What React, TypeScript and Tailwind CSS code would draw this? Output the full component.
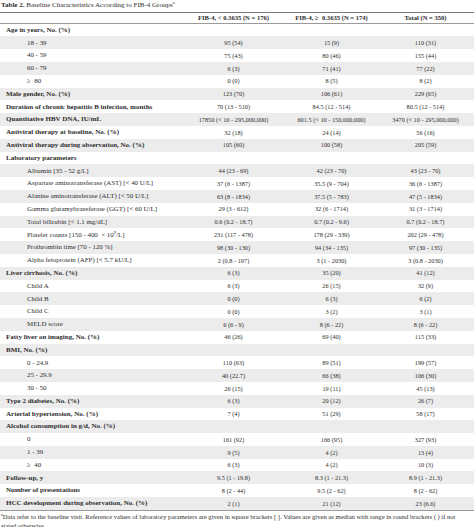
import React from "react";

type Row = {
  label: React.ReactNode;
  sub?: boolean;
  a?: string;
  b?: string;
  c?: string;
};

const rows: Row[] = [
  { label: "Age in years, No. (%)" },
  { label: "18 - 39", sub: true, a: "95 (54)", b: "15 (9)", c: "110 (31)" },
  { label: "40 - 59", sub: true, a: "75 (43)", b: "80 (46)", c: "155 (44)" },
  { label: "60 - 79", sub: true, a: "6 (3)", b: "71 (41)", c: "77 (22)" },
  { label: <>≥&nbsp;&nbsp;80</>, sub: true, a: "0 (0)", b: "8 (5)", c: "8 (2)" },
  { label: "Male gender, No. (%)", a: "123 (70)", b: "106 (61)", c: "229 (65)" },
  { label: "Duration of chronic hepatitis B infection, months", a: "70 (13 - 510)", b: "84.5 (12 - 514)", c: "80.5 (12 - 514)" },
  { label: "Quantitative HBV DNA, IU/mL", a: "17850 (< 10 - 295,000,000)", b: "601.5 (< 10 - 150,000,000)", c: "3470 (< 10 - 295,000,000)" },
  { label: "Antiviral therapy at baseline, No. (%)", a: "32 (18)", b: "24 (14)", c: "56 (16)" },
  { label: "Antiviral therapy during observation, No. (%)", a: "105 (60)", b: "100 (58)", c: "205 (59)" },
  { label: "Laboratory parameters" },
  { label: "Albumin [35 - 52 g/L]", sub: true, a: "44 (23 - 69)", b: "42 (23 - 70)", c: "43 (23 - 70)" },
  { label: "Aspartate aminotransferase (AST) [< 40 U/L]", sub: true, a: "37 (6 - 1387)", b: "35.5 (9 - 704)", c: "36 (6 - 1387)" },
  { label: "Alanine aminotransferase (ALT) [< 50 U/L]", sub: true, a: "63 (8 - 1834)", b: "37.5 (5 - 783)", c: "47 (5 - 1834)" },
  { label: "Gamma glutamyltransferase (GGT) [< 60 U/L]", sub: true, a: "29 (3 - 612)", b: "32 (6 - 1714)", c: "31 (3 - 1714)" },
  { label: "Total bilirubin [< 1.1 mg/dL]", sub: true, a: "0.6 (0.2 - 18.7)", b: "0.7 (0.2 - 9.6)", c: "0.7 (0.2 - 18.7)" },
  {
    label: (
      <>
        Platelet counts [150 - 400 &nbsp;× 10<sup className="text-[4.5px]">9</sup>/L]
      </>
    ),
    sub: true,
    a: "231 (117 - 478)",
    b: "178 (29 - 339)",
    c: "202 (29 - 478)",
  },
  { label: "Prothrombin time [70 - 120 %]", sub: true, a: "98 (30 - 130)", b: "94 (34 - 135)", c: "97 (30 - 135)" },
  { label: "Alpha fetoprotein (AFP) [< 5.7 kU/L]", sub: true, a: "2 (0.8 - 197)", b: "3 (1 - 2030)", c: "3 (0.8 - 2030)" },
  { label: "Liver cirrhosis, No. (%)", a: "6 (3)", b: "35 (20)", c: "41 (12)" },
  { label: "Child A", sub: true, a: "6 (3)", b: "26 (15)", c: "32 (9)" },
  { label: "Child B", sub: true, a: "0 (0)", b: "6 (3)", c: "6 (2)" },
  { label: "Child C", sub: true, a: "0 (0)", b: "3 (2)", c: "3 (1)" },
  { label: "MELD score", sub: true, a: "6 (6 - 9)", b: "8 (6 - 22)", c: "8 (6 - 22)" },
  { label: "Fatty liver on imaging, No. (%)", a: "46 (26)", b: "69 (40)", c: "115 (33)" },
  { label: "BMI, No. (%)" },
  { label: "0 - 24.9", sub: true, a: "110 (63)", b: "89 (51)", c: "199 (57)" },
  { label: "25 - 29.9", sub: true, a: "40 (22.7)", b: "66 (38)", c: "106 (30)" },
  { label: "30 - 50", sub: true, a: "26 (15)", b: "19 (11)", c: "45 (13)" },
  { label: "Type 2 diabetes, No. (%)", a: "6 (3)", b: "20 (12)", c: "26 (7)" },
  { label: "Arterial hypertension, No. (%)", a: "7 (4)", b: "51 (29)", c: "58 (17)" },
  { label: "Alcohol consumption in g/d, No. (%)" },
  { label: "0", sub: true, a: "161 (92)", b: "166 (95)", c: "327 (93)" },
  { label: "1 - 39", sub: true, a: "9 (5)", b: "4 (2)", c: "13 (4)" },
  { label: <>≥&nbsp;&nbsp;40</>, sub: true, a: "6 (3)", b: "4 (2)", c: "10 (3)" },
  { label: "Follow-up, y", a: "9.5 (1 - 19.8)", b: "8.3 (1 - 21.3)", c: "8.9 (1 - 21.3)" },
  { label: "Number of presentations", a: "8 (2 - 44)", b: "9.5 (2 - 62)", c: "8 (2 - 62)" },
  { label: "HCC development during observation, No. (%)", a: "2 (1)", b: "21 (12)", c: "23 (6.6)" },
];

const cols = "grid grid-cols-[185px_97px_99px_1fr] pr-1";

export default function App() {
  return (
    <div className="w-[474px] h-[527px] overflow-hidden bg-white text-[#2e2e2e] font-['Liberation_Serif',serif]">
      {/* Title */}
      <div className="h-[12px] leading-[10px] text-[7px] pl-[1px] whitespace-nowrap">
        <span className="font-bold">Table 2.</span> Baseline Characteristics According to FIB-4 Groups
        <span className="align-top text-[4.5px] leading-[6px]">a</span>
      </div>

      {/* Header */}
      <div className={`${cols} h-[11.6px] items-center border-t-[1.5px] border-b border-t-[#7a7a7a] border-b-[#9a9a9a] text-[6.6px] font-bold`}>
        <div />
        <div className="text-center">FIB-4, &lt; 0.3635 (N = 176)</div>
        <div className="text-center">FIB-4, ≥&nbsp; 0.3635 (N = 174)</div>
        <div className="text-center">Total (N = 350)</div>
      </div>

      {/* Body */}
      <div className="border-b border-[#9a9a9a]">
        {rows.map((r, i) => (
          <div
            key={i}
            className={`${cols} h-[12.8px] items-center whitespace-nowrap text-[6.3px] ${i % 2 === 1 ? "bg-[#ececec]" : "bg-white"}`}
          >
            <div className={r.sub ? "pl-[27px] text-[6.9px]" : "pl-[6px] text-[7px] font-bold"}>{r.label}</div>
            <div className="text-center">{r.a}</div>
            <div className="text-center">{r.b}</div>
            <div className="text-center">{r.c}</div>
          </div>
        ))}
      </div>

      {/* Footnote */}
      <p className="pt-[1px] pl-[1px] pr-[2px] text-[6.6px] leading-[9px]">
        <span className="align-top text-[4px] leading-[5px]">a</span>Data refer to the baseline visit. Reference values of laboratory parameters are given in square
        brackets [ ]. Values are given as median with range in round brackets ( ) if not stated otherwise.
      </p>
    </div>
  );
}
